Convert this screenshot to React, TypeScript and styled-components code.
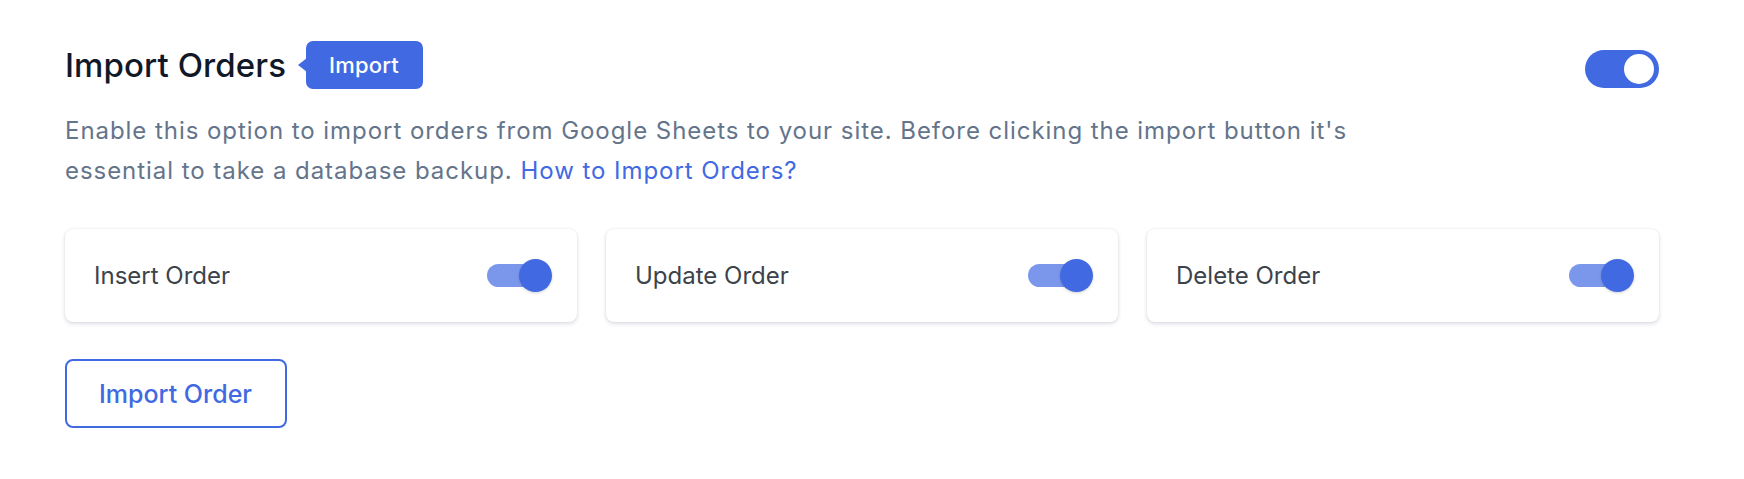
import styled, { createGlobalStyle } from 'styled-components';

const BLUE = '#4169e1';

const GlobalStyle = createGlobalStyle`
  body {
    margin: 0;
    background: #ffffff;
    font-family: Inter, 'Noto Sans', sans-serif;
  }
`;

interface SwitchProps {
  checked: boolean;
}

const MainSwitch = ({ checked }: SwitchProps) => (
  <MainTrack $checked={checked}>
    <MainKnob $checked={checked} />
  </MainTrack>
);

const OptionSwitch = ({ checked }: SwitchProps) => (
  <OptionSwitchBox>
    <OptionTrack $checked={checked} />
    <OptionKnob $checked={checked} />
  </OptionSwitchBox>
);

const options = ['Insert Order', 'Update Order', 'Delete Order'];

export default function App() {
  return (
    <>
      <GlobalStyle />
      <Section>
        <Header>
          <TitleGroup>
            <Title>Import Orders</Title>
            <Badge>Import</Badge>
          </TitleGroup>
          <MainSwitch checked />
        </Header>
        <Description>
          Enable this option to import orders from Google Sheets to your site. Before clicking the
          import button it's essential to take a database backup.{' '}
          <HelpLink href="#">How to Import Orders?</HelpLink>
        </Description>
        <OptionGrid>
          {options.map((label) => (
            <OptionCard key={label}>
              <OptionLabel>{label}</OptionLabel>
              <OptionSwitch checked />
            </OptionCard>
          ))}
        </OptionGrid>
        <ImportButton type="button">Import Order</ImportButton>
      </Section>
    </>
  );
}

const Section = styled.section`
  width: 1594px;
  padding: 41px 0 0 65px;
  display: flex;
  flex-direction: column;
  align-items: flex-start;
`;

const Header = styled.div`
  width: 100%;
  display: flex;
  align-items: center;
  justify-content: space-between;
`;

const TitleGroup = styled.div`
  display: flex;
  align-items: center;
`;

const Title = styled.h2`
  margin: 0;
  font-size: 33px;
  line-height: 40px;
  font-weight: 500;
  color: #111827;
  letter-spacing: 0.1px;
`;

const Badge = styled.span`
  position: relative;
  margin-left: 20px;
  height: 48px;
  padding: 0 24px 0 23px;
  display: inline-flex;
  align-items: center;
  border-radius: 7px;
  background: ${BLUE};
  color: #ffffff;
  font-size: 22px;
  font-weight: 500;
  letter-spacing: 0.2px;
  &::before {
    content: '';
    position: absolute;
    left: -8px;
    top: 50%;
    transform: translateY(-50%);
    border-top: 7px solid transparent;
    border-bottom: 7px solid transparent;
    border-right: 9px solid ${BLUE};
  }
`;

const MainTrack = styled.div<{ $checked: boolean }>`
  margin-top: 7px;
  width: 74px;
  height: 38px;
  box-sizing: border-box;
  padding: 4px 5px;
  border-radius: 19px;
  background: ${({ $checked }) => ($checked ? BLUE : '#cbd5e1')};
  display: flex;
  justify-content: ${({ $checked }) => ($checked ? 'flex-end' : 'flex-start')};
`;

const MainKnob = styled.span<{ $checked: boolean }>`
  width: 30px;
  height: 30px;
  border-radius: 50%;
  background: #ffffff;
`;

const Description = styled.p`
  margin: 22px 0 0;
  max-width: 1330px;
  font-size: 24px;
  line-height: 40px;
  letter-spacing: 0.95px;
  color: #64748b;
`;

const HelpLink = styled.a`
  color: ${BLUE};
  text-decoration: none;
`;

const OptionGrid = styled.div`
  width: 100%;
  margin-top: 38px;
  display: grid;
  grid-template-columns: repeat(3, 1fr);
  gap: 29px;
`;

const OptionCard = styled.div`
  height: 93px;
  box-sizing: border-box;
  padding: 0 25px 0 29px;
  display: flex;
  align-items: center;
  justify-content: space-between;
  border-radius: 8px;
  background: #ffffff;
  box-shadow: 0 0 2px rgba(15, 23, 42, 0.1), 0 2px 4px rgba(30, 41, 80, 0.14);
`;

const OptionLabel = styled.span`
  font-size: 24px;
  color: #3c434a;
`;

const OptionSwitchBox = styled.div`
  position: relative;
  width: 65px;
  height: 33px;
`;

const OptionTrack = styled.span<{ $checked: boolean }>`
  position: absolute;
  left: 0;
  top: 5px;
  width: 58px;
  height: 23px;
  border-radius: 12px;
  background: ${({ $checked }) => ($checked ? '#7b97ec' : '#cbd5e1')};
`;

const OptionKnob = styled.span<{ $checked: boolean }>`
  position: absolute;
  top: 0;
  ${({ $checked }) => ($checked ? 'right: 0;' : 'left: 0;')}
  width: 33px;
  height: 33px;
  border-radius: 50%;
  background: ${({ $checked }) => ($checked ? BLUE : '#f5f5f5')};
  box-shadow: 0 1px 3px rgba(0, 0, 0, 0.18);
`;

const ImportButton = styled.button`
  margin-top: 37px;
  height: 69px;
  padding: 0 33px 0 32px;
  border: 2px solid ${BLUE};
  border-radius: 8px;
  background: #ffffff;
  color: ${BLUE};
  font-family: Inter, 'Noto Sans', sans-serif;
  font-size: 25px;
  font-weight: 500;
  cursor: pointer;
`;
